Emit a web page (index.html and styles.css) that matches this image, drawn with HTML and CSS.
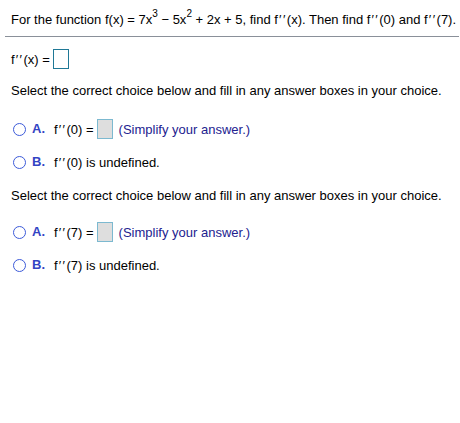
FILE: index.html
```html
<!DOCTYPE html>
<html>
<head>
<meta charset="utf-8">
<link rel="stylesheet" href="styles.css">
</head>
<body>
<div class="page">
  <div class="question">For the function f(x) = 7x<sup>3</sup> − 5x<sup>2</sup> + 2x + 5, find f<span class="pr">′′</span>(x). Then find f<span class="pr">′′</span>(0) and f<span class="pr">′′</span>(7).</div>
  <hr class="divider">
  <div class="answer-line">f<span class="pr">′′</span>(x) = <span class="box active"></span></div>
  <div class="instr first">Select the correct choice below and fill in any answer boxes in your choice.</div>
  <div class="choices one">
    <div class="choice"><span class="radio"></span><span class="letter">A.</span><span class="ctext">f<span class="pr">′′</span>(0) = <span class="box gray"></span></span><span class="hint">(Simplify your answer.)</span></div>
    <div class="choice"><span class="radio"></span><span class="letter">B.</span><span class="ctext">f<span class="pr">′′</span>(0) is undefined.</span></div>
  </div>
  <div class="instr second">Select the correct choice below and fill in any answer boxes in your choice.</div>
  <div class="choices two">
    <div class="choice"><span class="radio"></span><span class="letter">A.</span><span class="ctext">f<span class="pr">′′</span>(7) = <span class="box gray"></span></span><span class="hint">(Simplify your answer.)</span></div>
    <div class="choice"><span class="radio"></span><span class="letter">B.</span><span class="ctext">f<span class="pr">′′</span>(7) is undefined.</span></div>
  </div>
</div>
</body>
</html>
```

FILE: styles.css
```css
html, body {
  margin: 0;
  padding: 0;
  background: #ffffff;
}
body {
  font-family: "Liberation Sans", Arial, sans-serif;
  font-size: 13px;
  color: #000;
}
.page {
  padding: 11px 0 0 0;
}
.pr {
  letter-spacing: 1.5px;
  margin-left: 1px;
}
.question {
  padding-left: 11px;
  line-height: 18px;
}
.question sup {
  font-size: 10px;
  line-height: 0;
  vertical-align: 7px;
}
.divider {
  margin: 7px 1px 0 5px;
  border: 0;
  border-top: 1px solid #8a9099;
  height: 0;
}
.answer-line {
  margin-top: 12px;
  padding-left: 11px;
  display: flex;
  align-items: center;
  height: 20px;
}
.box {
  display: inline-block;
  box-sizing: border-box;
  width: 16px;
  height: 20px;
  margin-left: 3px;
}
.box.active {
  border: 1.5px solid #1f7896;
  background: #fff;
}
.box.gray {
  border: 1px solid #7cb9d0;
  background: #dedede;
}
.instr {
  padding-left: 11px;
  line-height: 16px;
}
.instr.first { margin-top: 14px; }
.instr.second { margin-top: 16px; }
.choices {
  display: flex;
  flex-direction: column;
  gap: 13px;
  padding-left: 13px;
}
.choices.one { margin-top: 20px; }
.choices.two { margin-top: 18px; }
.choice {
  display: flex;
  align-items: center;
  height: 20px;
}
.radio {
  width: 13px;
  height: 13px;
  box-sizing: border-box;
  border: 1.5px solid #3d5bd9;
  border-radius: 50%;
  margin-right: 6px;
}
.letter {
  color: #3344c4;
  font-weight: bold;
  width: 22px;
  position: relative;
  top: -1px;
}
.ctext {
  display: flex;
  align-items: center;
}
.hint {
  color: #22228f;
  margin-left: 6px;
}
```
